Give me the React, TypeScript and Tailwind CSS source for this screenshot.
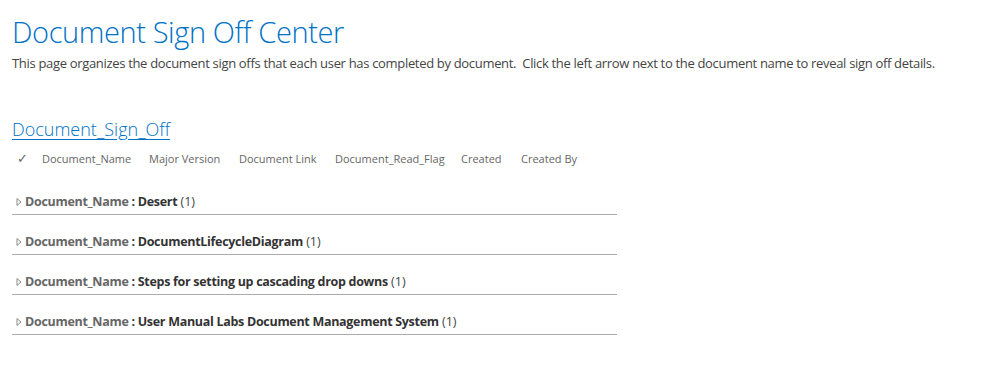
import React from "react";

const columns = ["Document_Name", "Major Version", "Document Link", "Document_Read_Flag", "Created", "Created By"];

const groups = [
  "Desert",
  "DocumentLifecycleDiagram",
  "Steps for setting up cascading drop downs",
  "User Manual Labs Document Management System",
];

export default function App() {
  return (
    <div className="w-[1001px] h-[365px] bg-white pl-[12px] pt-[14px] font-['Open_Sans',sans-serif] text-[#444]">
      <h1 className="text-[29px] leading-[36px] font-light text-[#0072c6] tracking-[-0.4px]">Document Sign Off Center</h1>
      <p className="text-[13px] leading-[16px] mt-[5px] text-[#444] tracking-[-0.32px]">
        This page organizes the document sign offs that each user has completed by document.&nbsp; Click the left arrow next to the document name to reveal sign off details.
      </p>

      <div className="mt-[46px]">
        <a href="#" className="text-[18px] leading-[24px] text-[#0072c6] underline underline-offset-[3px] font-light">Document_Sign_Off</a>
      </div>

      <div className="mt-[7px] flex items-center h-[20px] text-[11px] text-[#666]">
        <span className="w-[30px] pl-[5px] text-[13px] text-[#666]">✓</span>
        <span className="w-[107px]">{columns[0]}</span>
        <span className="w-[90px]">{columns[1]}</span>
        <span className="w-[96px]">{columns[2]}</span>
        <span className="w-[126px]">{columns[3]}</span>
        <span className="w-[60px]">{columns[4]}</span>
        <span>{columns[5]}</span>
      </div>

      <div className="mt-[6px] w-[605px]">
        {groups.map((g) => (
          <div key={g} className="h-[40px] flex flex-col justify-end">
            <div className="flex items-center h-[20px] text-[12.5px]">
              <svg width="10" height="10" viewBox="0 0 10 10" className="ml-[2px] mr-[1px]">
                <path d="M3 1.5 L7 5 L3 8.5 Z" fill="none" stroke="#888" strokeWidth="1" />
              </svg>
              <span className="font-bold text-[#666] tracking-[-0.3px]">Document_Name</span>
              <span className="font-bold text-[#333] tracking-[-0.3px] whitespace-pre"> : {g}</span>
              <span className="whitespace-pre text-[#444]"> (1)</span>
            </div>
            <div className="mt-[2px] border-b border-[#ababab]" />
          </div>
        ))}
      </div>
    </div>
  );
}
